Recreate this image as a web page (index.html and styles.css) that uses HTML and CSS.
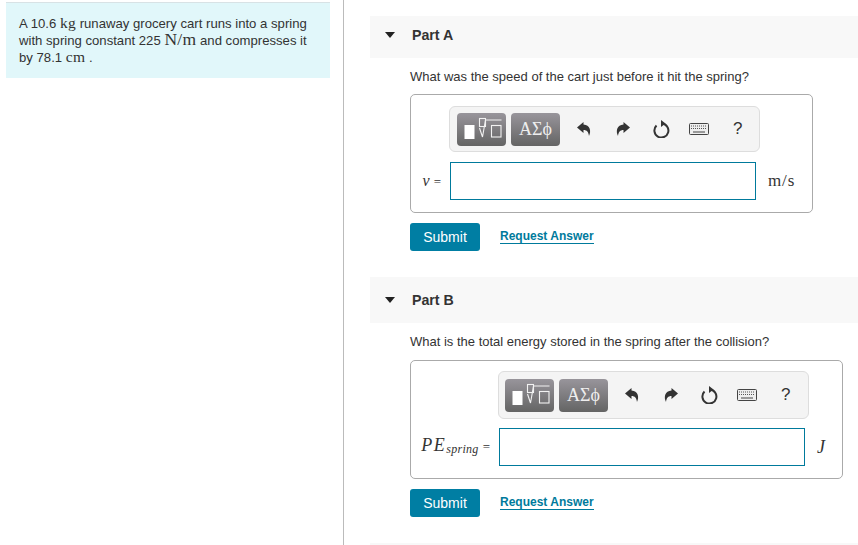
FILE: index.html
```html
<!DOCTYPE html>
<html>
<head>
  <title>Runaway Grocery Cart</title>
  <link rel="stylesheet" href="styles.css">
</head>
<body>
  <div class="page">
    <div class="left">
      <div class="intro">
        <p>A 10.6 <span class="math">kg</span> runaway grocery cart runs into a spring<br>with spring constant 225 <span class="math big">N/m</span> and compresses it<br>by 78.1 <span class="math">cm</span> .</p>
      </div>
    </div>

    <div class="right">
      <div class="part-head">
        <span class="caret"></span>
        <span class="part-title">Part A</span>
      </div>
      <p class="question question-a">What was the speed of the cart just before it hit the spring?</p>
      <div class="answer answer-a">
        <div class="toolbar">
          <div class="tool-btn">
            <svg width="46" height="33" viewBox="0 0 46 33">
              <rect x="5.500" y="12" width="10" height="14" fill="#fff"/>
              <g fill="none" stroke="#f2f2f2" stroke-width="1.100">
                <rect x="20.500" y="5.500" width="6" height="8"/>
                <path d="M20.500 15l3 9 3-17h16"/>
                <rect x="32.500" y="12.500" width="9.500" height="11.500"/>
              </g>
            </svg>
          </div>
          <div class="tool-btn greek">ΑΣϕ</div>
          <svg class="icon undo" width="16" height="16" viewBox="0 0 16 16"><path d="M7.500 1L1 6.500 7.500 12V9c3.500 0 5 2 5.500 6 2.500-5 1-11-5.500-11.500z" fill="#333"/></svg>
          <svg class="icon redo" width="16" height="16" viewBox="0 0 16 16"><path d="M8.500 1L15 6.500 8.500 12V9c-3.500 0-5 2-5.500 6-2.500-5-1-11 5.500-11.500z" fill="#333"/></svg>
          <svg class="icon reset" width="18" height="18" viewBox="0 0 18 18"><path d="M4.500 5.500a7 7 0 1 0 5-2" fill="none" stroke="#333" stroke-width="2"/><path d="M9 0l4.500 3.500L9 7z" fill="#333"/></svg>
          <svg class="icon keys" width="20" height="12" viewBox="0 0 20 12"><rect x=".5" y=".5" width="19" height="11" rx="1" fill="#eee" stroke="#444"/><path d="M2 3h16M2 5.500h16" stroke="#555" stroke-dasharray="1 1" fill="none"/><path d="M4 9h12" stroke="#444"/></svg>
          <span class="help">?</span>
        </div>
        <div class="input-row">
          <span class="label"><i class="var">v</i> <span class="eq">=</span></span>
          <div class="field"></div>
          <span class="unit">m/s</span>
        </div>
      </div>
      <div class="actions">
        <span class="submit">Submit</span>
        <span class="request">Request Answer</span>
      </div>

      <div class="part-head part-b">
        <span class="caret"></span>
        <span class="part-title">Part B</span>
      </div>
      <p class="question">What is the total energy stored in the spring after the collision?</p>
      <div class="answer answer-b">
        <div class="toolbar">
          <div class="tool-btn">
            <svg width="46" height="33" viewBox="0 0 46 33">
              <rect x="5.500" y="12" width="10" height="14" fill="#fff"/>
              <g fill="none" stroke="#f2f2f2" stroke-width="1.100">
                <rect x="20.500" y="5.500" width="6" height="8"/>
                <path d="M20.500 15l3 9 3-17h16"/>
                <rect x="32.500" y="12.500" width="9.500" height="11.500"/>
              </g>
            </svg>
          </div>
          <div class="tool-btn greek">ΑΣϕ</div>
          <svg class="icon undo" width="16" height="16" viewBox="0 0 16 16"><path d="M7.500 1L1 6.500 7.500 12V9c3.500 0 5 2 5.500 6 2.500-5 1-11-5.500-11.500z" fill="#333"/></svg>
          <svg class="icon redo" width="16" height="16" viewBox="0 0 16 16"><path d="M8.500 1L15 6.500 8.500 12V9c-3.500 0-5 2-5.500 6-2.500-5-1-11 5.500-11.500z" fill="#333"/></svg>
          <svg class="icon reset" width="18" height="18" viewBox="0 0 18 18"><path d="M4.500 5.500a7 7 0 1 0 5-2" fill="none" stroke="#333" stroke-width="2"/><path d="M9 0l4.500 3.500L9 7z" fill="#333"/></svg>
          <svg class="icon keys" width="20" height="12" viewBox="0 0 20 12"><rect x=".5" y=".5" width="19" height="11" rx="1" fill="#eee" stroke="#444"/><path d="M2 3h16M2 5.500h16" stroke="#555" stroke-dasharray="1 1" fill="none"/><path d="M4 9h12" stroke="#444"/></svg>
          <span class="help">?</span>
        </div>
        <div class="input-row">
          <span class="label"><i class="pe">PE<sub>spring</sub></i> <span class="eq">=</span></span>
          <div class="field"></div>
          <span class="unit"><i class="joule">J</i></span>
        </div>
      </div>
      <div class="actions">
        <span class="submit">Submit</span>
        <span class="request">Request Answer</span>
      </div>
      <div class="bottom-strip"></div>
    </div>
  </div>
</body>
</html>
```

FILE: styles.css
```css
body {
  font-family: "Liberation Sans", Arial, sans-serif;
  color: #333;
  background-color: #fff;
  margin: 0;
  padding: 0;
}

.page {
  display: flex;
  width: 858px;
  height: 545px;
  overflow: hidden;
}

.left {
  width: 344px;
  height: 545px;
  padding: 2px 13px 0 6px;
  box-sizing: border-box;
  border-right: 1px solid #bbb;
  flex-shrink: 0;
}

.intro {
  height: 76px;
  box-sizing: border-box;
  background-color: #e1f7fa;
  border-top: 1px solid #d8e2e5;
  padding: 12px 13px 0;
}

.intro p {
  margin: 0;
  font-size: 13.15px;
  line-height: 17px;
}

.math {
  font-family: "Liberation Serif", serif;
  font-size: 15.5px;
  letter-spacing: 0.3px;
  line-height: 0;
}

.math.big {
  font-size: 17.5px;
}

.right {
  flex: 1;
  padding: 16px 0 0 26px;
  display: flex;
  flex-direction: column;
  align-items: flex-start;
}

.part-head {
  width: 100%;
  height: 42px;
  flex-shrink: 0;
  background-color: #f8f8f8;
  display: flex;
  align-items: center;
  padding-left: 15px;
  padding-bottom: 4px;
  box-sizing: border-box;
}

.part-b {
  height: 46px;
  margin-top: 26px;
  padding-bottom: 0;
}

.caret {
  width: 0;
  height: 0;
  border-left: 5.5px solid transparent;
  border-right: 5.5px solid transparent;
  border-top: 6px solid #222;
}

.part-title {
  margin-left: 17px;
  font-size: 14.2px;
  font-weight: bold;
  color: #333;
}

.question {
  margin: 11px 0 10px 40px;
  font-size: 13px;
  line-height: 16px;
}

.question-a {
  margin-bottom: 9px;
}

.answer {
  margin-left: 40px;
  border: 1px solid #aaa;
  border-radius: 5px;
  box-sizing: border-box;
  height: 119px;
  padding-top: 11px;
}

.answer-a {
  width: 403px;
}

.answer-b {
  width: 433px;
  padding-top: 10px;
}

.toolbar {
  width: 311px;
  height: 46px;
  box-sizing: border-box;
  margin-left: 38px;
  background-color: #f4f4f4;
  border: 1px solid #ddd;
  border-radius: 6px;
  display: flex;
  align-items: center;
  padding-left: 7px;
}

.answer-b .toolbar {
  margin-left: 87px;
  height: 48px;
  padding-left: 6px;
}

.tool-btn {
  width: 49px;
  height: 33px;
  margin-right: 5px;
  border-radius: 4px;
  background: linear-gradient(#98959b, #646464);
  display: flex;
  align-items: center;
  justify-content: center;
  color: #eee;
}

.greek {
  font-family: "Liberation Serif", serif;
  font-size: 18px;
  margin-right: 0;
}

.icon {
  flex-shrink: 0;
}

.undo {
  margin-left: 16px;
}

.redo {
  margin-left: 23px;
}

.reset {
  margin-left: 21px;
}

.keys {
  margin-left: 19px;
}

.help {
  margin-left: 24px;
  font-size: 17px;
}

.input-row {
  display: flex;
  align-items: center;
  margin-top: 10px;
}

.answer-b .input-row {
  margin-top: 9px;
}

.label {
  width: 39px;
  box-sizing: border-box;
  text-align: right;
  padding-right: 9px;
  font-family: "Liberation Serif", serif;
  white-space: nowrap;
}

.answer-b .label {
  width: 88px;
  padding-bottom: 4px;
}

.var {
  font-size: 16px;
}

.pe {
  font-size: 18px;
  letter-spacing: 1.5px;
}

.pe sub {
  font-size: 12px;
  line-height: 0;
  letter-spacing: 0.3px;
  vertical-align: -2px;
}

.eq {
  font-size: 13px;
}

.field {
  width: 306px;
  height: 38px;
  box-sizing: border-box;
  background-color: #fff;
  border: 1px solid #007a9c;
}

.unit {
  margin-left: 12px;
  font-family: "Liberation Serif", serif;
  font-size: 17px;
  letter-spacing: 0.9px;
}

.joule {
  font-size: 18px;
}

.actions {
  display: flex;
  align-items: center;
  margin: 10px 0 0 40px;
}

.submit {
  width: 70px;
  height: 28px;
  background-color: #007ea3;
  border-radius: 3px;
  color: #fff;
  font-size: 14px;
  display: flex;
  align-items: center;
  justify-content: center;
}

.request {
  margin-left: 20px;
  margin-top: -1px;
  font-size: 12px;
  font-weight: bold;
  color: #007a9c;
  border-bottom: 1px solid #007a9c;
}

.bottom-strip {
  width: 100%;
  height: 2px;
  flex-shrink: 0;
  margin-top: 26px;
  background-color: #f8f8f8;
}
```
